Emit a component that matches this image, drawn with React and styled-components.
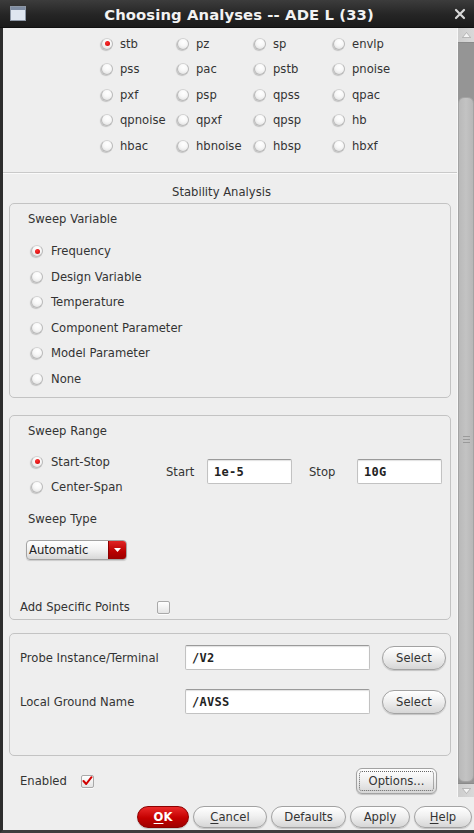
import React from 'react';
import styled, { createGlobalStyle, css } from 'styled-components';

const Global = createGlobalStyle`
  html, body { margin: 0; padding: 0; background: #222; }
  #root { width: 474px; height: 833px; overflow: hidden; }
  * { box-sizing: border-box; }
`;

const Window = styled.div`
  width: 474px;
  height: 833px;
  display: flex;
  flex-direction: column;
  font-family: "DejaVu Sans", "Liberation Sans", sans-serif;
  font-size: 11.6px;
  color: #333;
`;

const TitleBar = styled.div`
  height: 28px;
  flex: none;
  display: grid;
  grid-template-columns: 1fr auto 1fr;
  align-items: center;
  padding: 0 6px 0 10px;
  background: linear-gradient(#3c3c3c, #252525 55%, #1b1b1b);
  border-bottom: 1px solid #111;
`;

const TitleText = styled.div`
  font-weight: bold;
  font-size: 14.8px;
  color: #f2f2f2;
  letter-spacing: 0.1px;
  padding-top: 1px;
`;

const TitleIcon = styled.svg`
  width: 16px;
  height: 15px;
  justify-self: start;
`;

const CloseIcon = styled.svg`
  width: 12px;
  height: 12px;
  justify-self: end;
  margin-right: 2px;
`;

const Frame = styled.div`
  flex: 1;
  display: flex;
  flex-direction: column;
  background: #eeeeee;
  border-left: 3px solid #2d2d2d;
  border-bottom: 3px solid #3d3d3d;
`;

const Upper = styled.div`
  height: 769px;
  flex: none;
  display: flex;
`;

const Main = styled.div`
  flex: 1;
  display: flex;
  flex-direction: column;
  border-right: 1px solid #f8f8f8;
`;

const AnalysisGrid = styled.div`
  display: grid;
  grid-template-columns: 76px 77px 79px 80px;
  grid-auto-rows: 25.5px;
  padding: 3px 0 0 98px;
`;

const RadioItem = styled.label`
  display: flex;
  align-items: center;
  gap: ${p => p.$gap || 7}px;
  white-space: nowrap;
`;

const RadioDot = styled.span`
  position: relative;
  flex: none;
  width: 12px;
  height: 12px;
  border-radius: 50%;
  border: 1px solid #b9b9b9;
  border-top-color: #d2d2d2;
  background: radial-gradient(circle at 55% 30%, #ffffff 0%, #f7f7f7 45%, #d9d9d9 100%);
  box-shadow: -1px 1px 1px rgba(0, 0, 0, 0.18);
  ${p => p.$checked && css`
    &::after {
      content: '';
      position: absolute;
      left: 2.5px;
      top: 2.5px;
      width: 5px;
      height: 5px;
      border-radius: 50%;
      background: radial-gradient(circle at 40% 35%, #ff3030, #c80000);
    }
  `}
`;

const Separator = styled.div`
  margin-top: 13px;
  height: 1px;
  background: #c9c9c9;
  box-shadow: 0 1px 0 #fafafa;
`;

const SectionTitle = styled.div`
  margin-top: 12px;
  line-height: 15px;
  text-align: center;
  padding-right: 17px;
`;

const Group = styled.div`
  margin: ${p => p.$mt}px 6px 0 6px;
  height: ${p => p.$h}px;
  flex: none;
  border: 1px solid #c3c3c3;
  border-radius: 5px;
  background: #eeeeee;
  padding: 8px 0 0 0;
  display: flex;
  flex-direction: column;
`;

const GroupTitle = styled.div`
  line-height: 15px;
  padding-left: 18px;
`;

const RadioList = styled.div`
  display: grid;
  grid-auto-rows: 25.5px;
  padding-left: 21px;
  margin-top: ${p => p.$mt}px;
`;

const RangeRow = styled.div`
  display: flex;
  margin-top: 10px;
`;

const RangeRadios = styled.div`
  width: 156px;
  flex: none;
  display: grid;
  grid-auto-rows: 25.5px;
  padding-left: 21px;
`;

const FieldPair = styled.div`
  display: flex;
  align-items: center;
  margin-top: 10px;
  height: 25px;
`;

const FieldLabel = styled.span`
  width: ${p => p.$w}px;
  flex: none;
`;

const TextField = styled.div`
  width: ${p => p.$w}px;
  height: 25px;
  flex: none;
  display: flex;
  align-items: center;
  padding-left: 6px;
  background: #ffffff;
  border: 1px solid #c2c2c2;
  border-top-color: #9a9a9a;
  border-radius: 2px;
  box-shadow: inset 0 1px 1px rgba(0, 0, 0, 0.12);
  font-family: "DejaVu Sans Mono", "Liberation Mono", monospace;
  font-weight: bold;
  font-size: 12px;
  color: #222;
  letter-spacing: 0.3px;
`;

const SubLabel = styled.div`
  margin-top: 12px;
  line-height: 15px;
  padding-left: 18px;
`;

const Dropdown = styled.div`
  margin: 13px 0 0 16px;
  width: 101px;
  height: 20px;
  display: flex;
  border: 1px solid #a3a3a3;
  border-radius: 4px;
  overflow: hidden;
  background: linear-gradient(#ffffff, #f1f1f1 50%, #d8d8d8);
  box-shadow: 0 1px 1px rgba(0, 0, 0, 0.15);
`;

const DropdownText = styled.span`
  flex: 1;
  padding-left: 2px;
  line-height: 18px;
  color: #222;
`;

const DropdownArrow = styled.span`
  width: 18px;
  flex: none;
  display: flex;
  align-items: center;
  justify-content: center;
  background: linear-gradient(#e02424, #b80000 60%, #9c0000);
  border-left: 1px solid #8a0000;
`;

const CheckRow = styled.div`
  display: flex;
  align-items: center;
  margin-top: ${p => p.$mt}px;
  padding-left: ${p => p.$pl}px;
  height: ${p => p.$h || 16}px;
`;

const CheckLabel = styled.span`
  width: ${p => p.$w}px;
  flex: none;
`;

const CheckBox = styled.span`
  width: 13px;
  height: 13px;
  flex: none;
  display: flex;
  align-items: center;
  justify-content: center;
  border: 1px solid #a9a9a9;
  border-radius: 2px;
  background: linear-gradient(#ffffff, #e4e4e4);
  box-shadow: 0 1px 0 rgba(255, 255, 255, 0.8);
`;

const ProbeRow = styled.div`
  display: flex;
  align-items: center;
  height: 25px;
  padding-left: 10px;
  margin-top: ${p => p.$mt}px;
`;

const RoundButton = styled.button`
  appearance: none;
  padding: 0;
  margin: 0;
  width: ${p => p.$w}px;
  height: ${p => p.$h}px;
  flex: none;
  border-radius: ${p => p.$r}px;
  border: 1px solid #a2a2a2;
  background: linear-gradient(#ffffff, #f0f0f0 45%, #d6d6d6);
  box-shadow: 0 1px 1px rgba(0, 0, 0, 0.18);
  font-family: "DejaVu Sans", "Liberation Sans", sans-serif;
  font-size: 11.6px;
  color: #333;
  cursor: default;
  ${p => p.$focus && css`
    outline: 1px dotted #666;
    outline-offset: -4px;
  `}
  ${p => p.$primary && css`
    background: linear-gradient(#ea2a2a, #c40000 55%, #a00000);
    border-color: #8c0000;
    color: #ffffff;
    font-weight: bold;
  `}
`;

const EnabledRow = styled.div`
  display: flex;
  align-items: center;
  margin-top: 12px;
  padding: 0 20px 0 17px;
  height: 26px;
`;

const Spacer = styled.div`
  flex: 1;
`;

const Scrollbar = styled.div`
  width: 16px;
  flex: none;
  display: flex;
  flex-direction: column;
  background: #959595;
`;

const ScrollArrow = styled.div`
  height: ${p => p.$h}px;
  flex: none;
  display: flex;
  align-items: center;
  justify-content: center;
  background: linear-gradient(90deg, #cdcdcd, #d9d9d9);
  border-bottom: ${p => (p.$top ? '1px solid #8a8a8a' : 'none')};
  border-top: ${p => (p.$top ? 'none' : '1px solid #8a8a8a')};
`;

const Track = styled.div`
  flex: 1;
  display: flex;
  flex-direction: column;
  padding: 54px 0 1px 0;
`;

const Thumb = styled.div`
  flex: 1;
  border-radius: 6px;
  border: 1px solid #a3a3a3;
  background: linear-gradient(90deg, #b9b9b9, #c3c3c3 50%, #b7b7b7);
  display: flex;
  align-items: center;
  justify-content: center;
`;

const Grip = styled.div`
  width: 7px;
  height: 7px;
  background: repeating-linear-gradient(#9a9a9a 0 1px, transparent 1px 3px);
`;

const ButtonBar = styled.div`
  flex: 1;
  display: flex;
  justify-content: flex-end;
  align-items: flex-start;
  gap: 4px;
  padding: 9px 2px 0 0;
`;

const Mn = styled.span`
  text-decoration: underline;
  text-underline-offset: 2px;
`;

const Radio = ({ checked, children, gap }) => (
  <RadioItem $gap={gap}>
    <RadioDot $checked={checked} />
    <span>{children}</span>
  </RadioItem>
);

const analyses = [
  'stb', 'pz', 'sp', 'envlp',
  'pss', 'pac', 'pstb', 'pnoise',
  'pxf', 'psp', 'qpss', 'qpac',
  'qpnoise', 'qpxf', 'qpsp', 'hb',
  'hbac', 'hbnoise', 'hbsp', 'hbxf',
];

const sweepVars = [
  'Frequency', 'Design Variable', 'Temperature',
  'Component Parameter', 'Model Parameter', 'None',
];

const Triangle = ({ up, color = '#f4f4f4' }) => (
  <svg width="9" height="6" viewBox="0 0 9 6">
    <path d={up ? 'M0.5 5.5 L4.5 0.5 L8.5 5.5 Z' : 'M0.5 0.5 L4.5 5.5 L8.5 0.5 Z'} fill={color} stroke="#9a9a9a" strokeWidth="0.6" />
  </svg>
);

export default function App() {
  return (
    <Window>
      <Global />
      <TitleBar>
        <TitleIcon viewBox="0 0 16 15">
          <rect x="0.5" y="0.5" width="15" height="14" fill="#dfe6f0" stroke="#8d97a6" />
          <rect x="1" y="1" width="14" height="3" fill="#7f8da3" />
        </TitleIcon>
        <TitleText>Choosing Analyses -- ADE L (33)</TitleText>
        <CloseIcon viewBox="0 0 12 12">
          <path d="M2 2 L10 10 M10 2 L2 10" stroke="#d8d8d8" strokeWidth="2.2" strokeLinecap="round" />
        </CloseIcon>
      </TitleBar>
      <Frame>
        <Upper>
          <Main>
            <AnalysisGrid>
              {analyses.map(a => (
                <Radio key={a} checked={a === 'stb'}>{a}</Radio>
              ))}
            </AnalysisGrid>
            <Separator />
            <SectionTitle>Stability Analysis</SectionTitle>

            <Group $mt={3.5} $h={195}>
              <GroupTitle>Sweep Variable</GroupTitle>
              <RadioList $mt={11.5}>
                {sweepVars.map(v => (
                  <Radio key={v} checked={v === 'Frequency'} gap={8}>{v}</Radio>
                ))}
              </RadioList>
            </Group>

            <Group $mt={17} $h={205}>
              <GroupTitle>Sweep Range</GroupTitle>
              <RangeRow>
                <RangeRadios>
                  <Radio checked gap={8}>Start-Stop</Radio>
                  <Radio gap={8}>Center-Span</Radio>
                </RangeRadios>
                <FieldPair>
                  <FieldLabel $w={41}>Start</FieldLabel>
                  <TextField $w={85}>1e-5</TextField>
                  <FieldLabel $w={17} />
                  <FieldLabel $w={48}>Stop</FieldLabel>
                  <TextField $w={85}>10G</TextField>
                </FieldPair>
              </RangeRow>
              <SubLabel>Sweep Type</SubLabel>
              <Dropdown>
                <DropdownText>Automatic</DropdownText>
                <DropdownArrow>
                  <svg width="7" height="4" viewBox="0 0 7 4">
                    <path d="M0 0 L7 0 L3.5 4 Z" fill="#ffffff" />
                  </svg>
                </DropdownArrow>
              </Dropdown>
              <CheckRow $mt={39} $pl={10}>
                <CheckLabel $w={137}>Add Specific Points</CheckLabel>
                <CheckBox />
              </CheckRow>
            </Group>

            <Group $mt={13} $h={123}>
              <ProbeRow $mt={3}>
                <FieldLabel $w={165}>Probe Instance/Terminal</FieldLabel>
                <TextField $w={185}>/V2</TextField>
                <FieldLabel $w={12} />
                <RoundButton $w={64} $h={24} $r={12}>Select</RoundButton>
              </ProbeRow>
              <ProbeRow $mt={19}>
                <FieldLabel $w={165}>Local Ground Name</FieldLabel>
                <TextField $w={185}>/AVSS</TextField>
                <FieldLabel $w={12} />
                <RoundButton $w={64} $h={24} $r={12}>Select</RoundButton>
              </ProbeRow>
            </Group>

            <EnabledRow>
              <CheckLabel $w={61}>Enabled</CheckLabel>
              <CheckBox>
                <svg width="11" height="10" viewBox="0 0 11 10">
                  <path d="M1.5 5 L4.2 8 L9.5 1.2" fill="none" stroke="#d10000" strokeWidth="2" strokeLinecap="round" strokeLinejoin="round" />
                </svg>
              </CheckBox>
              <Spacer />
              <RoundButton $w={81} $h={26} $r={6} $focus>Options...</RoundButton>
            </EnabledRow>
          </Main>
          <Scrollbar>
            <ScrollArrow $h={15} $top>
              <Triangle up />
            </ScrollArrow>
            <Track>
              <Thumb>
                <Grip />
              </Thumb>
            </Track>
            <ScrollArrow $h={14}>
              <Triangle />
            </ScrollArrow>
          </Scrollbar>
        </Upper>
        <ButtonBar>
          <RoundButton $w={52} $h={22} $r={11} $primary><Mn>O</Mn>K</RoundButton>
          <RoundButton $w={74} $h={22} $r={11}><Mn>C</Mn>ancel</RoundButton>
          <RoundButton $w={75} $h={22} $r={11}>Defaults</RoundButton>
          <RoundButton $w={60} $h={22} $r={11}>Apply</RoundButton>
          <RoundButton $w={58} $h={22} $r={11}><Mn>H</Mn>elp</RoundButton>
        </ButtonBar>
      </Frame>
    </Window>
  );
}
